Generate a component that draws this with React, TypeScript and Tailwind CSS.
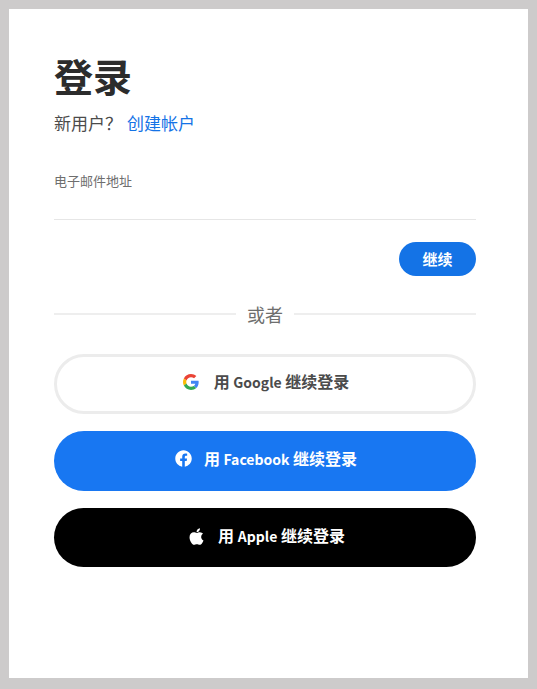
import { FaApple, FaFacebook } from 'react-icons/fa'

const font = { fontFamily: '"Noto Sans CJK SC", "Noto Sans", sans-serif' }
const socialBtn = 'w-full rounded-[30px] flex items-center justify-center text-[16px] font-bold'

function GoogleIcon() {
  return (
    <svg width="16" height="16" viewBox="0 0 48 48">
      <path fill="#EA4335" d="M24 9.5c3.54 0 6.71 1.22 9.21 3.6l6.85-6.85C35.9 2.38 30.47 0 24 0 14.62 0 6.51 5.38 2.56 13.22l7.98 6.19C12.43 13.72 17.74 9.5 24 9.5z" />
      <path fill="#4285F4" d="M46.98 24.55c0-1.57-.15-3.09-.38-4.55H24v9.02h12.94c-.58 2.96-2.26 5.48-4.78 7.18l7.73 6c4.51-4.18 7.09-10.36 7.09-17.65z" />
      <path fill="#FBBC05" d="M10.53 28.59c-.48-1.45-.76-2.99-.76-4.59s.27-3.14.76-4.59l-7.98-6.19C.92 16.46 0 20.12 0 24c0 3.88.92 7.54 2.56 10.78l7.97-6.19z" />
      <path fill="#34A853" d="M24 48c6.48 0 11.93-2.13 15.89-5.81l-7.73-6c-2.15 1.45-4.92 2.3-8.16 2.3-6.26 0-11.57-4.22-13.47-9.91l-7.98 6.19C6.51 42.62 14.62 48 24 48z" />
    </svg>
  )
}

export default function App() {
  return (
    <div style={font} className="h-[689px] bg-[#cdcbcb] pt-[9px] pb-[11px] pl-[9px] pr-[9px]">
      <div className="h-full bg-white pl-[45px] pr-[52px] pt-[38px]">
        <h1 className="text-[39px] leading-[56px] font-bold text-[#2c2c2c]">登录</h1>
        <p className="mt-[7px] text-[17px] leading-[26px] text-[#4b4b4b]">
          新用户？<a className="ml-[5px] text-[#1473e6]">创建帐户</a>
        </p>
        <label className="block mt-[36px] text-[13px] leading-[18px] text-[#6e6e6e]">电子邮件地址</label>
        <div className="mt-[29px] border-b border-[#e6e6e6]" />
        <div className="mt-[22px] flex justify-end">
          <button className="w-[77px] h-[34px] rounded-[17px] bg-[#1473e6] text-white text-[15px] font-bold">继续</button>
        </div>
        <div className="mt-[26px] flex items-center gap-[11px] text-[#6e6e6e] text-[18px] leading-[24px]">
          <div className="flex-1 border-b-2 border-[#eeeeee]" />
          <span>或者</span>
          <div className="flex-1 border-b-2 border-[#eeeeee]" />
        </div>
        <div className="mt-[28px] flex flex-col gap-[17px]">
          <button className={socialBtn + ' h-[60px] pb-[4px] pl-[2px] bg-white border-[3px] border-[#ececec] text-[#4b4b4b]'}>
            <GoogleIcon />
            <span className="ml-[15px] mb-[2px]">用 <span className="text-[14px]">Google</span> 继续登录</span>
          </button>
          <button className={socialBtn + ' h-[60px] pb-[5px] pl-[2px] bg-[#1877f2] text-white'}>
            <FaFacebook size={17} />
            <span className="ml-[12px] mb-[2px]">用 <span className="text-[14px]">Facebook</span> 继续登录</span>
          </button>
          <button className={socialBtn + ' h-[59px] pb-[3px] pl-[2px] bg-black text-white'}>
            <FaApple size={19} />
            <span className="ml-[12px] mb-[3px]">用 <span className="text-[14px]">Apple</span> 继续登录</span>
          </button>
        </div>
      </div>
    </div>
  )
}
